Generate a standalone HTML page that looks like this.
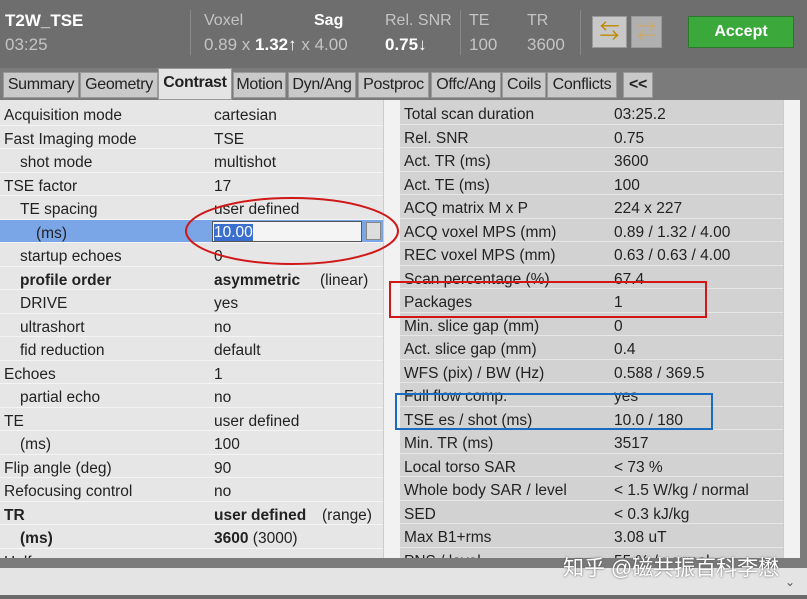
<!DOCTYPE html>
<html><head><meta charset="utf-8"><style>
*{margin:0;padding:0;box-sizing:border-box}
body{width:807px;height:599px;overflow:hidden;background:#7b7b7b;font-family:"Liberation Sans","Noto Sans CJK SC",sans-serif;position:relative}
.a{position:absolute;white-space:nowrap}
.hd{left:0;top:0;width:807px;height:68px;background:#6e6e6e}
.w{color:#fff}.g{color:#c4c4c4}
.tab{position:absolute;top:72px;height:26px;background:#c9c9c9;border:1px solid #9a9a9a;font-size:16px;color:#222;text-align:center;line-height:24px;letter-spacing:-0.3px}
.row{position:absolute;height:23.5px;font-size:15.5px;color:#222;line-height:27px;border-bottom:1px solid #f4f4f4}
.L{left:0;width:383px;background:#e6e6e6}
.R{left:400px;width:383px;background:#d2d2d2;border-bottom:1px solid #e6e6e6}
.row span{position:absolute;top:0}
b{font-weight:bold}
</style></head><body>
<div class="a hd"></div>
<div class="a w" style="left:5px;top:11px;font-size:17px;font-weight:bold">T2W_TSE</div>
<div class="a g" style="left:5px;top:35px;font-size:17px">03:25</div>
<div class="a" style="left:190px;top:10px;width:1px;height:45px;background:#888"></div>
<div class="a g" style="left:204px;top:12px;font-size:16px">Voxel</div>
<div class="a w" style="left:314px;top:12px;font-size:16px;font-weight:bold">Sag</div>
<div class="a g" style="left:204px;top:35px;font-size:17px">0.89 x <b class="w">1.32↑</b> x 4.00</div>
<div class="a g" style="left:385px;top:12px;font-size:16px">Rel. SNR</div>
<div class="a w" style="left:385px;top:35px;font-size:17px;font-weight:bold">0.75↓</div>
<div class="a" style="left:460px;top:10px;width:1px;height:45px;background:#888"></div>
<div class="a g" style="left:469px;top:12px;font-size:16px">TE</div>
<div class="a g" style="left:469px;top:35px;font-size:17px">100</div>
<div class="a g" style="left:527px;top:12px;font-size:16px">TR</div>
<div class="a g" style="left:527px;top:35px;font-size:17px">3600</div>
<div class="a" style="left:580px;top:10px;width:1px;height:45px;background:#888"></div>
<div class="a" style="left:592px;top:16px;width:35px;height:32px;background:#c8c8c8;border:1px solid #999;color:#c08a00;font-size:20px;text-align:center;line-height:30px">⇆</div>
<div class="a" style="left:631px;top:16px;width:31px;height:32px;background:#b0b0b0;border:1px solid #999;color:#c9aa70;font-size:20px;text-align:center;line-height:30px">⇄</div>
<div class="a" style="left:688px;top:16px;width:106px;height:32px;background:#3aa83a;border:1px solid #2a7a2a;color:#fff;font-size:16px;font-weight:bold;text-align:center;line-height:30px">Accept</div>
<div class="a" style="left:0;top:68px;width:807px;height:32px;background:#7b7b7b"></div>
<div class="tab" style="left:3px;width:76px">Summary</div>
<div class="tab" style="left:80px;width:78px">Geometry</div>
<div class="tab" style="left:158px;width:74px;top:68px;height:32px;background:#e4e4e4;font-weight:bold;line-height:28px">Contrast</div>
<div class="tab" style="left:233px;width:53px">Motion</div>
<div class="tab" style="left:288px;width:68px">Dyn/Ang</div>
<div class="tab" style="left:358px;width:71px">Postproc</div>
<div class="tab" style="left:431px;width:70px">Offc/Ang</div>
<div class="tab" style="left:502px;width:44px">Coils</div>
<div class="tab" style="left:547px;width:70px">Conflicts</div>
<div class="tab" style="left:623px;width:30px;font-weight:bold">&lt;&lt;</div>

<div class="a" style="left:0;top:100px;width:400px;height:458px;background:#e6e6e6"></div>
<div class="a" style="left:383px;top:100px;width:17px;height:458px;background:#f2f2f2;border-left:1px solid #ccc"></div>
<div class="a" style="left:400px;top:100px;width:383px;height:458px;background:#d2d2d2"></div>
<div class="a" style="left:783px;top:100px;width:17px;height:458px;background:#f2f2f2;border-left:1px solid #ccc"></div>
<div class="a" style="left:800px;top:100px;width:7px;height:458px;background:#7b7b7b"></div>

<div class="row L" style="top:102px"><span style="left:4px">Acquisition mode</span><span style="left:214px">cartesian</span></div>
<div class="row L" style="top:125.5px"><span style="left:4px">Fast Imaging mode</span><span style="left:214px">TSE</span></div>
<div class="row L" style="top:149px"><span style="left:20px">shot mode</span><span style="left:214px">multishot</span></div>
<div class="row L" style="top:172.5px"><span style="left:4px">TSE factor</span><span style="left:214px">17</span></div>
<div class="row L" style="top:196px"><span style="left:20px">TE spacing</span><span style="left:214px">user defined</span></div>
<div class="row L" style="top:219.5px;background:#7aa6e8"><span style="left:36px">(ms)</span><span style="left:212px;top:1px;width:150px;height:21px;background:#f4f4f4;border:1px solid #555;padding-left:1px;line-height:21px"><span style="position:static;background:#3a6fd0;color:#fff">10.00</span></span><span style="left:366px;top:2px;width:15px;height:18px;background:#ddd;border:1px solid #888"></span></div>
<div class="row L" style="top:243px"><span style="left:20px">startup echoes</span><span style="left:214px">0</span></div>
<div class="row L" style="top:266.5px"><span style="left:20px"><b>profile order</b></span><span style="left:214px"><b>asymmetric</b></span><span style="left:320px">(linear)</span></div>
<div class="row L" style="top:290px"><span style="left:20px">DRIVE</span><span style="left:214px">yes</span></div>
<div class="row L" style="top:313.5px"><span style="left:20px">ultrashort</span><span style="left:214px">no</span></div>
<div class="row L" style="top:337px"><span style="left:20px">fid reduction</span><span style="left:214px">default</span></div>
<div class="row L" style="top:360.5px"><span style="left:4px">Echoes</span><span style="left:214px">1</span></div>
<div class="row L" style="top:384px"><span style="left:20px">partial echo</span><span style="left:214px">no</span></div>
<div class="row L" style="top:407.5px"><span style="left:4px">TE</span><span style="left:214px">user defined</span></div>
<div class="row L" style="top:431px"><span style="left:20px">(ms)</span><span style="left:214px">100</span></div>
<div class="row L" style="top:454.5px"><span style="left:4px">Flip angle (deg)</span><span style="left:214px">90</span></div>
<div class="row L" style="top:478px"><span style="left:4px">Refocusing control</span><span style="left:214px">no</span></div>
<div class="row L" style="top:501.5px"><span style="left:4px"><b>TR</b></span><span style="left:214px"><b>user defined</b></span><span style="left:322px">(range)</span></div>
<div class="row L" style="top:525px"><span style="left:20px"><b>(ms)</b></span><span style="left:214px"><b>3600</b> (3000)</span></div>
<div class="row L" style="top:548.5px;height:10px;overflow:hidden"><span style="left:4px">Halfscan</span><span style="left:214px">no</span></div>

<div class="row R" style="top:101px"><span style="left:4px">Total scan duration</span><span style="left:214px">03:25.2</span></div>
<div class="row R" style="top:124.5px"><span style="left:4px">Rel. SNR</span><span style="left:214px">0.75</span></div>
<div class="row R" style="top:148px"><span style="left:4px">Act. TR (ms)</span><span style="left:214px">3600</span></div>
<div class="row R" style="top:171.5px"><span style="left:4px">Act. TE (ms)</span><span style="left:214px">100</span></div>
<div class="row R" style="top:195px"><span style="left:4px">ACQ matrix M x P</span><span style="left:214px">224 x 227</span></div>
<div class="row R" style="top:218.5px"><span style="left:4px">ACQ voxel MPS (mm)</span><span style="left:214px">0.89 / 1.32 / 4.00</span></div>
<div class="row R" style="top:242px"><span style="left:4px">REC voxel MPS (mm)</span><span style="left:214px">0.63 / 0.63 / 4.00</span></div>
<div class="row R" style="top:265.5px"><span style="left:4px">Scan percentage (%)</span><span style="left:214px">67.4</span></div>
<div class="row R" style="top:289px"><span style="left:4px">Packages</span><span style="left:214px">1</span></div>
<div class="row R" style="top:312.5px"><span style="left:4px">Min. slice gap (mm)</span><span style="left:214px">0</span></div>
<div class="row R" style="top:336px"><span style="left:4px">Act. slice gap (mm)</span><span style="left:214px">0.4</span></div>
<div class="row R" style="top:359.5px"><span style="left:4px">WFS (pix) / BW (Hz)</span><span style="left:214px">0.588 / 369.5</span></div>
<div class="row R" style="top:383px"><span style="left:4px">Full flow comp.</span><span style="left:214px">yes</span></div>
<div class="row R" style="top:406.5px"><span style="left:4px">TSE es / shot (ms)</span><span style="left:214px">10.0 / 180</span></div>
<div class="row R" style="top:430px"><span style="left:4px">Min. TR (ms)</span><span style="left:214px">3517</span></div>
<div class="row R" style="top:453.5px"><span style="left:4px">Local torso SAR</span><span style="left:214px">&lt; 73 %</span></div>
<div class="row R" style="top:477px"><span style="left:4px">Whole body SAR / level</span><span style="left:214px">&lt; 1.5 W/kg / normal</span></div>
<div class="row R" style="top:500.5px"><span style="left:4px">SED</span><span style="left:214px">&lt; 0.3 kJ/kg</span></div>
<div class="row R" style="top:524px"><span style="left:4px">Max B1+rms</span><span style="left:214px">3.08 uT</span></div>
<div class="row R" style="top:547.5px;height:11px;overflow:hidden"><span style="left:4px">PNS / level</span><span style="left:214px">55 % / normal</span></div>

<div class="a" style="left:0;top:558px;width:807px;height:10px;background:#7b7b7b"></div>
<div class="a" style="left:0;top:568px;width:807px;height:27px;background:#e4e4e4"></div>
<div class="a" style="left:0;top:595px;width:807px;height:4px;background:#6a6a6a"></div>
<div class="a" style="left:785px;top:575px;font-size:12px;color:#555">⌄</div>

<svg class="a" style="left:0;top:0" width="807" height="599">
<ellipse cx="292" cy="231" rx="106" ry="33" fill="none" stroke="#d01818" stroke-width="2"/>
<rect x="390" y="282" width="316" height="35" fill="none" stroke="#d01818" stroke-width="2"/>
<rect x="396" y="394" width="316" height="35" fill="none" stroke="#1a6cc0" stroke-width="2"/>
</svg>
<div class="a" style="left:563px;top:552px;font-size:21px;color:#fff;text-shadow:0 0 2px #555">知乎 @磁共振百科李懋</div>
</body></html>
